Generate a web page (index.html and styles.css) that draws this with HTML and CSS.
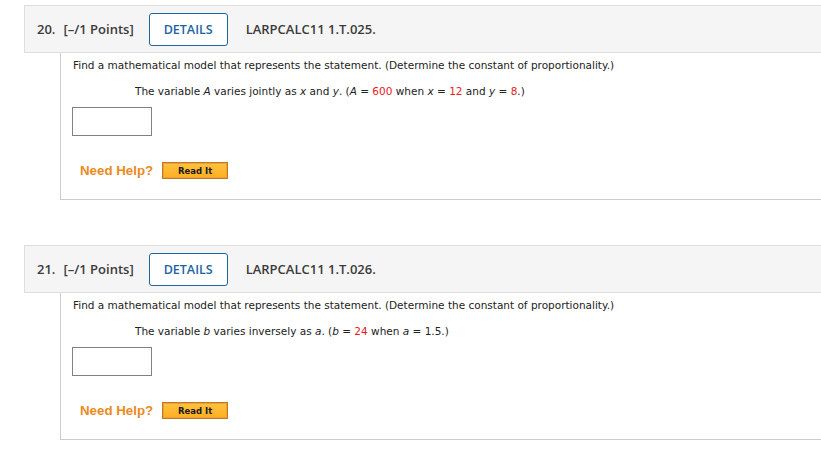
FILE: index.html
```html
<!DOCTYPE html>
<html lang="en">
<head>
<meta charset="utf-8">
<title>Questions</title>
<link rel="stylesheet" href="styles.css">
</head>
<body>
<div class="page">
  <section class="question">
    <header class="qhead">
      <span class="qnum">20.</span>
      <span class="qpts">[–/1 Points]</span>
      <button class="details">DETAILS</button>
      <span class="qid">LARPCALC11 1.T.025.</span>
    </header>
    <div class="qbody">
      <p class="prompt">Find a mathematical model that represents the statement. (Determine the constant of proportionality.)</p>
      <p class="stmt">The variable <i>A</i> varies jointly as <i>x</i> and <i>y</i>. (<i>A</i> = <span class="red">600</span> when <i>x</i> = <span class="red">12</span> and <i>y</i> = <span class="red">8</span>.)</p>
      <div class="answer"></div>
      <div class="help">
        <span class="needhelp">Need Help?</span>
        <span class="readit">Read It</span>
      </div>
    </div>
  </section>
  <section class="question">
    <header class="qhead">
      <span class="qnum">21.</span>
      <span class="qpts">[–/1 Points]</span>
      <button class="details">DETAILS</button>
      <span class="qid">LARPCALC11 1.T.026.</span>
    </header>
    <div class="qbody">
      <p class="prompt">Find a mathematical model that represents the statement. (Determine the constant of proportionality.)</p>
      <p class="stmt">The variable <i>b</i> varies inversely as <i>a</i>. (<i>b</i> = <span class="red">24</span> when <i>a</i> = 1.5.)</p>
      <div class="answer"></div>
      <div class="help">
        <span class="needhelp">Need Help?</span>
        <span class="readit">Read It</span>
      </div>
    </div>
  </section>
</div>
</body>
</html>
```

FILE: styles.css
```css
html, body {
  margin: 0;
  padding: 0;
  background: #fff;
  overflow: hidden;
}
.page {
  padding: 5px 0 0 24px;
  width: 810px;
}
.question {
  display: flex;
  flex-direction: column;
  margin-bottom: 45px;
}
.question:last-child {
  margin-bottom: 0;
}
.qhead {
  display: flex;
  align-items: center;
  height: 46px;
  background: #f5f5f5;
  border-top: 1px solid #dedede;
  border-bottom: 1px solid #dedede;
  border-left: 1px solid #dedede;
  font-family: "Open Sans", sans-serif;
  font-weight: 600;
  font-size: 13px;
  color: #3b3b3b;
}
.qnum {
  margin-left: 12px;
}
.qpts {
  margin-left: 8px;
}
.details {
  margin-left: 15px;
  width: 79px;
  height: 33px;
  box-sizing: border-box;
  border: 1px solid #1e64a0;
  border-radius: 3px;
  background: #fff;
  color: #1d64a0;
  font-family: "Open Sans", sans-serif;
  font-weight: 600;
  font-size: 12.5px;
  padding: 0;
}
.qid {
  margin-left: 18px;
}
.qbody {
  margin-left: 36px;
  height: 147px;
  border-left: 1px solid #cccccc;
  border-bottom: 1px solid #cccccc;
  padding: 5px 0 0 12px;
  box-sizing: border-box;
  font-family: "DejaVu Sans", Verdana, sans-serif;
  font-size: 10.5px;
  color: #222;
}
.prompt {
  margin: 0;
  line-height: 14px;
}
.stmt {
  margin: 12px 0 0 62px;
  line-height: 14px;
}
.red {
  color: #e8191b;
}
.answer {
  margin-top: 9px;
  margin-left: -1px;
  width: 80px;
  height: 29px;
  box-sizing: border-box;
  border: 1px solid #828282;
}
.help {
  display: flex;
  align-items: center;
  margin-top: 26px;
  margin-left: 7px;
  gap: 9px;
}
.needhelp {
  font-family: "Liberation Sans", Arial, sans-serif;
  font-weight: bold;
  font-size: 13.3px;
  color: #ec8a1c;
  line-height: 16px;
}
.readit {
  display: flex;
  align-items: center;
  justify-content: center;
  width: 66px;
  height: 17px;
  box-sizing: border-box;
  border: 1px solid #c27a22;
  background: linear-gradient(#ffc143, #ffaf1f);
  box-shadow: inset 0 0 0 1px #f0a030;
  font-family: "DejaVu Sans", Verdana, sans-serif;
  font-weight: bold;
  font-size: 8.5px;
  color: #1a1a1a;
}
```
